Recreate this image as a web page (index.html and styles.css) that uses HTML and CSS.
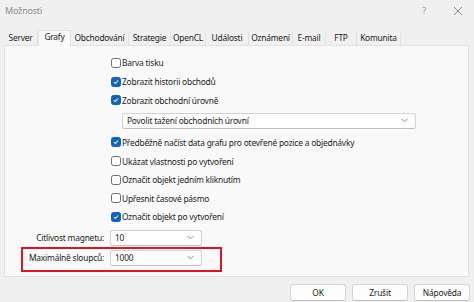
FILE: index.html
```html
<!DOCTYPE html>
<html lang="cs">
<head>
<meta charset="utf-8">
<title>Možnosti</title>
<link rel="stylesheet" href="styles.css">
</head>
<body>
<div class="window">
  <div class="titlebar">
    <span class="title">Možnosti</span>
    <span class="tb-help">?</span>
    <svg class="tb-close" width="10" height="10" viewBox="0 0 10 10"><path d="M1 1 L9 9 M9 1 L1 9" stroke="#8a8a8a" stroke-width="1" fill="none"/></svg>
  </div>
  <div class="tabs">
    <div class="tab">Server</div>
    <div class="tab active">Grafy</div>
    <div class="tab">Obchodování</div>
    <div class="tab">Strategie</div>
    <div class="tab">OpenCL</div>
    <div class="tab">Události</div>
    <div class="tab">Oznámení</div>
    <div class="tab">E-mail</div>
    <div class="tab">FTP</div>
    <div class="tab">Komunita</div>
  </div>
  <div class="panel">
    <div class="checks">
      <div class="row"><span class="cb"></span><span>Barva tisku</span></div>
      <div class="row"><span class="cb on"><svg viewBox="0 0 10 10"><path d="M2.4 5.2 L4.2 7 L7.7 3.1"/></svg></span><span>Zobrazit historii obchodů</span></div>
      <div class="row"><span class="cb on"><svg viewBox="0 0 10 10"><path d="M2.4 5.2 L4.2 7 L7.7 3.1"/></svg></span><span>Zobrazit obchodní úrovně</span></div>
      <div class="select wide"><span>Povolit tažení obchodních úrovní</span><svg class="chev" viewBox="0 0 8 5"><path d="M0.5 0.5 L4 4 L7.5 0.5"/></svg></div>
      <div class="row"><span class="cb on"><svg viewBox="0 0 10 10"><path d="M2.4 5.2 L4.2 7 L7.7 3.1"/></svg></span><span>Předběžně načíst data grafu pro otevřené pozice a objednávky</span></div>
      <div class="row"><span class="cb"></span><span>Ukázat vlastnosti po vytvoření</span></div>
      <div class="row"><span class="cb"></span><span>Označit objekt jedním kliknutím</span></div>
      <div class="row"><span class="cb"></span><span>Upřesnit časové pásmo</span></div>
      <div class="row"><span class="cb on"><svg viewBox="0 0 10 10"><path d="M2.4 5.2 L4.2 7 L7.7 3.1"/></svg></span><span>Označit objekt po vytvoření</span></div>
    </div>
    <div class="fields">
      <span class="label">Citlivost magnetu:</span>
      <div class="select small"><span>10</span><svg class="chev" viewBox="0 0 8 5"><path d="M0.5 0.5 L4 4 L7.5 0.5"/></svg></div>
      <span class="label">Maximálně sloupců:</span>
      <div class="select small"><span>1000</span><svg class="chev" viewBox="0 0 8 5"><path d="M0.5 0.5 L4 4 L7.5 0.5"/></svg></div>
    </div>
    <div class="highlight"></div>
  </div>
  <div class="buttons">
    <div class="btn">OK</div>
    <div class="btn">Zrušit</div>
    <div class="btn">Nápověda</div>
  </div>
</div>
</body>
</html>
```
FILE: styles.css
```css
* { box-sizing: border-box; }
html, body { margin: 0; padding: 0; }
body {
  width: 474px;
  height: 302px;
  overflow: hidden;
  background: #f0f0f0;
  font-family: "Noto Sans", "Open Sans", sans-serif;
  font-size: 8.4px;
  letter-spacing: -0.2px;
  color: #1b1b1b;
}
.window { display: flex; flex-direction: column; height: 302px; }
.titlebar {
  height: 30px;
  display: flex;
  align-items: flex-start;
  padding: 3px 0 0 5px;
  line-height: 16px;
}
.title { color: #8c8c8c; font-size: 9px; flex: 1; }
.tb-help { color: #9a9a9a; font-size: 9px; margin-right: 27px; }
.tb-close { margin: 3px 11px 0 0; }
.tabs {
  display: grid;
  grid-template-columns: 34px 33px 58px 42px 35px 43px 44px 33px 31px 44px;
  margin-left: 4px;
  height: 15px;
  align-items: end;
}
.tab {
  height: 13px;
  line-height: 12px;
  text-align: center;
  border-right: 1px solid #e2e2e2;
  white-space: nowrap;
}
.tab.active {
  height: 16px;
  line-height: 12px;
  background: #f9f9f9;
  border: 1px solid #e2e2e2;
  border-bottom: none;
  margin-bottom: -1px;
  position: relative;
  z-index: 1;
}
.panel {
  position: relative;
  margin-left: 4px;
  width: 465px;
  height: 232px;
  background: #f9f9f9;
  border: 1px solid #e2e2e2;
  padding: 7.7px 0 0 0;
}
.checks {
  margin-left: 106px;
  display: flex;
  flex-direction: column;
}
.row {
  height: 18.6px;
  display: flex;
  align-items: center;
  white-space: nowrap;
}
.cb {
  width: 10px;
  height: 10px;
  border: 1px solid #6e6e6e;
  border-radius: 2.5px;
  background: #fdfdfd;
  margin-right: 1px;
  flex: none;
  display: flex;
}
.cb.on { background: #0f62c0; border-color: #0f62c0; }
.cb svg { width: 8px; height: 8px; }
.cb svg path { stroke: #fff; stroke-width: 1.3; fill: none; }
.select {
  height: 16px;
  background: #fefefe;
  border: 1px solid #d3d3d3;
  border-bottom-color: #bdbdbd;
  border-radius: 3px;
  display: flex;
  align-items: center;
  justify-content: space-between;
  padding: 0 7px 0 4px;
}
.select.wide {
  margin: 3.5px 0 4.2px 11px;
  width: 294px;
}
.chev { width: 7px; height: 5px; }
.chev path { stroke: #6a6a6a; stroke-width: 0.9; fill: none; }
.fields {
  display: grid;
  grid-template-columns: 99px 92px;
  column-gap: 6px;
  row-gap: 4px;
  margin-top: 3.6px;
  align-items: center;
}
.label { text-align: right; white-space: nowrap; }
.highlight {
  position: absolute;
  left: 16px;
  top: 201px;
  width: 201px;
  height: 25px;
  border: 2px solid #e0141e;
}
.buttons {
  display: flex;
  justify-content: flex-end;
  gap: 6px;
  padding-right: 4px;
  margin-top: 7px;
}
.btn {
  width: 56px;
  height: 17px;
  background: #fdfdfd;
  border: 1px solid #d3d3d3;
  border-bottom-color: #c0c0c0;
  border-radius: 3px;
  text-align: center;
  line-height: 15px;
}
```
